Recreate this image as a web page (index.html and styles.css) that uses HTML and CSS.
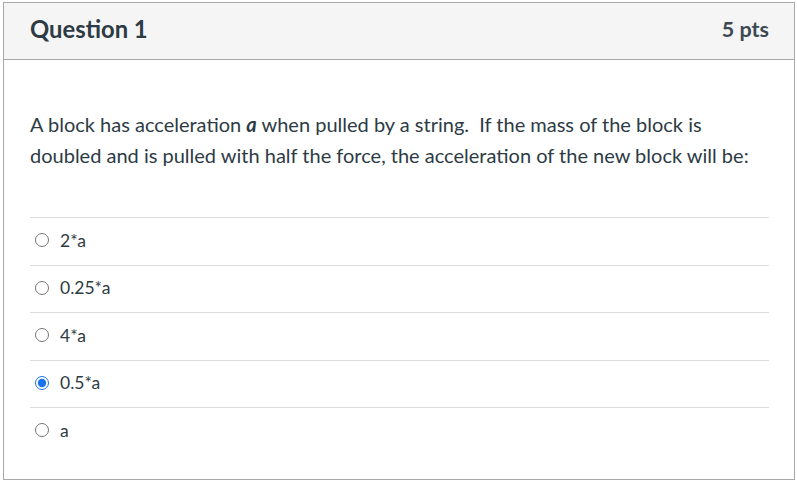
FILE: index.html
```html
<!DOCTYPE html>
<html>
<head>
<meta charset="utf-8">
<link rel="stylesheet" href="styles.css">
</head>
<body>
<div class="card">
  <div class="header">
    <div class="title">Question 1</div>
    <div class="pts">5 pts</div>
  </div>
  <div class="body">
    <p class="question">A block has acceleration <strong><em>a</em></strong> when pulled by a string.&nbsp; If the mass of the block is doubled and is pulled with half the force, the acceleration of the new block will be:</p>
    <div class="answers">
      <label class="answer"><input type="radio" name="q1"><span>2*a</span></label>
      <label class="answer"><input type="radio" name="q1"><span>0.25*a</span></label>
      <label class="answer"><input type="radio" name="q1"><span>4*a</span></label>
      <label class="answer"><input type="radio" name="q1" checked><span>0.5*a</span></label>
      <label class="answer"><input type="radio" name="q1"><span>a</span></label>
    </div>
  </div>
</div>
</body>
</html>
```

FILE: styles.css
```css
html, body {
  margin: 0;
  padding: 0;
  background: #fff;
}
body {
  padding: 2px 2px 0 3px;
  font-family: Lato, "Liberation Sans", sans-serif;
  color: #2d3b45;
}
.card {
  width: 790px;
  height: 476px;
  border: 1px solid #a8a8a8;
  box-sizing: content-box;
}
.header {
  height: 57px;
  box-sizing: border-box;
  background: #f5f5f5;
  border-bottom: 1px solid #a8a8a8;
  display: flex;
  align-items: center;
  justify-content: space-between;
  padding: 0 25px 4px 26px;
}
.title {
  font-size: 23.8px;
  font-weight: 700;
}
.pts {
  font-size: 21.5px;
  font-weight: 700;
  color: #3d4852;
}
.body {
  padding: 49px 25px 0 26px;
}
.question {
  margin: 0;
  font-size: 20px;
  line-height: 31px;
}
.question strong em {
  font-weight: 700;
  font-style: italic;
}
.answers {
  margin-top: 46px;
}
.answer {
  display: flex;
  align-items: center;
  height: 47.5px;
  box-sizing: border-box;
  padding-bottom: 2px;
  border-top: 1px solid #dcdcdc;
  font-size: 17.5px;
  color: #2d3b45;
}
.answer input {
  margin: 0 11px 0 5px;
  width: 14px;
  height: 14px;
  accent-color: #1a73e8;
}
```
